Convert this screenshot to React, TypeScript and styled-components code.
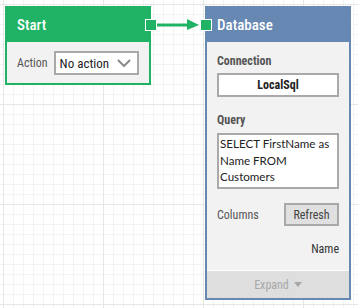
import React from 'react';
import styled, { createGlobalStyle } from 'styled-components';

const GREEN = '#21b365';
const BLUE = '#6788b2';
const UI_FONT = `"Roboto Condensed", "Liberation Sans Narrow", "DejaVu Sans Condensed", Roboto, sans-serif`;

const GlobalStyle = createGlobalStyle`
    html, body {
        margin: 0;
        padding: 0;
    }
    body {
        width: 358px;
        height: 308px;
        overflow: hidden;
        font-family: ${UI_FONT};
        background-color: #ffffff;
        background-image:
            linear-gradient(to right, #e6e6e6 1px, transparent 1px),
            linear-gradient(to bottom, #e6e6e6 1px, transparent 1px),
            linear-gradient(to right, #f3f3f3 1px, transparent 1px),
            linear-gradient(to bottom, #f3f3f3 1px, transparent 1px);
        background-size: 100px 100px, 100px 100px, 10px 10px, 10px 10px;
        background-position: 3px 4px, 3px 4px, 3px 4px, 3px 4px;
    }
`;

const Canvas = styled.div`
    position: relative;
    width: 358px;
    height: 308px;
`;

interface NodeProps {
    $color: string;
    $x: number;
    $y: number;
    $h?: number;
}

const Node = styled.div<NodeProps>`
    position: absolute;
    left: ${({ $x }) => $x}px;
    top: ${({ $y }) => $y}px;
    width: 146px;
    height: ${({ $h }) => ($h ? `${$h}px` : 'auto')};
    box-sizing: border-box;
    border: 2px solid ${({ $color }) => $color};
    display: flex;
    flex-direction: column;
    background: #f2f2f2;
`;

const Header = styled.div<{ $color: string }>`
    height: 34px;
    flex-shrink: 0;
    background: ${({ $color }) => $color};
    color: #ffffff;
    display: flex;
    align-items: center;
    padding-left: 10px;
    font-size: 15px;
    font-weight: 500;
`;

const StartBody = styled.div`
    display: flex;
    align-items: center;
    gap: 6px;
    padding: 9px 10px 8px;
`;

const Label = styled.span`
    font-size: 12px;
    color: #555555;
`;

const Select = styled.div`
    width: 86px;
    height: 24px;
    box-sizing: border-box;
    border: 2px solid #a9a9a9;
    background: #ffffff;
    display: flex;
    align-items: center;
    justify-content: space-between;
    padding: 0 6px 0 4px;
    font-size: 13px;
    color: #222222;
`;

const DbBody = styled.div`
    flex: 1;
    display: flex;
    flex-direction: column;
    padding-top: 11px;
`;

const Section = styled.div<{ $gap?: number }>`
    display: flex;
    flex-direction: column;
    padding: 0 10px;
    margin-top: ${({ $gap }) => $gap ?? 0}px;
`;

const FieldLabel = styled.div<{ $space?: number }>`
    font-size: 12px;
    line-height: 16px;
    font-weight: 700;
    color: #555555;
    margin-bottom: ${({ $space }) => $space ?? 4}px;
`;

const ValueBox = styled.div`
    height: 24px;
    box-sizing: border-box;
    border: 2px solid #a9a9a9;
    background: #ffffff;
    display: flex;
    align-items: center;
    justify-content: center;
    font-size: 12px;
    font-weight: 700;
    color: #222222;
`;

const QueryBox = styled.div`
    height: 56px;
    box-sizing: border-box;
    border: 2px solid #a9a9a9;
    background: #ffffff;
    padding: 1px 2px 0 1px;
    font-family: Lato, "Open Sans", sans-serif;
    font-size: 11.6px;
    line-height: 16.5px;
    color: #222222;
`;

const Row = styled.div`
    display: flex;
    align-items: center;
    justify-content: space-between;
    padding: 0 10px;
    margin-top: 14px;
`;

const Button = styled.div`
    width: 55px;
    height: 23px;
    box-sizing: border-box;
    border: 2px solid #a9a9a9;
    background: #e0e0e0;
    display: flex;
    align-items: center;
    justify-content: center;
    font-size: 12px;
    color: #444444;
`;

const ColumnName = styled.div`
    margin-top: 15px;
    padding: 0 10px;
    text-align: right;
    font-size: 12px;
    line-height: 16px;
    color: #333333;
`;

const Footer = styled.div`
    margin-top: auto;
    height: 27px;
    border-top: 1px solid #ffffff;
    background: #dedede;
    display: flex;
    align-items: center;
    justify-content: center;
    gap: 5px;
    font-size: 12px;
    color: #a8a8a8;
`;

const Connector = styled.svg`
    position: absolute;
    left: 144px;
    top: 18px;
`;

const Chevron = () => (
    <svg width="14" height="8" viewBox="0 0 14 8">
        <path d="M1 1 L7 7 L13 1" fill="none" stroke="#8a8a8a" strokeWidth="2" />
    </svg>
);

const App = () => {
    return (
        <Canvas>
            <GlobalStyle />
            <Node $color={GREEN} $x={5} $y={6}>
                <Header $color={GREEN}>Start</Header>
                <StartBody>
                    <Label>Action</Label>
                    <Select>
                        <span>No action</span>
                        <Chevron />
                    </Select>
                </StartBody>
            </Node>

            <Node $color={BLUE} $x={205} $y={6} $h={294}>
                <Header $color={BLUE}>Database</Header>
                <DbBody>
                    <Section>
                        <FieldLabel>Connection</FieldLabel>
                        <ValueBox>LocalSql</ValueBox>
                    </Section>
                    <Section $gap={15}>
                        <FieldLabel $space={5}>Query</FieldLabel>
                        <QueryBox>SELECT FirstName as Name FROM Customers</QueryBox>
                    </Section>
                    <Row>
                        <Label>Columns</Label>
                        <Button>Refresh</Button>
                    </Row>
                    <ColumnName>Name</ColumnName>
                    <Footer>
                        <span>Expand</span>
                        <svg width="8" height="5" viewBox="0 0 8 5">
                            <path d="M0 0 L8 0 L4 5 Z" fill="#a8a8a8" />
                        </svg>
                    </Footer>
                </DbBody>
            </Node>

            <Connector width="68" height="14" viewBox="0 0 68 14">
                <rect x="1.5" y="1.5" width="11" height="11" fill={GREEN} stroke="#ffffff" strokeWidth="1" />
                <line x1="13" y1="7" x2="45" y2="7" stroke={GREEN} strokeWidth="3" />
                <path d="M43 1 L55 7 L43 12 Z" fill={GREEN} />
                <rect x="56.5" y="1.5" width="11" height="11" fill={GREEN} stroke="#ffffff" strokeWidth="1" />
            </Connector>
        </Canvas>
    );
};

export default App;
